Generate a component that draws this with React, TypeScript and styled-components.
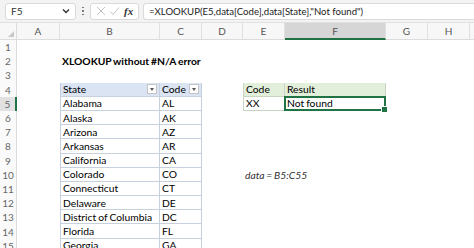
import { Fragment } from 'react';
import styled, { createGlobalStyle } from 'styled-components';

const GlobalStyle = createGlobalStyle`
  html, body {
    margin: 0;
    padding: 0;
    background: #ffffff;
    overflow: hidden;
  }
  body {
    font-family: Lato, "Liberation Sans", sans-serif;
  }
`;

const COLS = [17, 43, 100, 42, 41, 42, 101, 42, 42, 40];
const LETTERS = ['', 'A', 'B', 'C', 'D', 'E', 'F', 'G', 'H', ''];
const ROW_H = 14.2;

const states: [string, string][] = [
  ['Alabama', 'AL'],
  ['Alaska', 'AK'],
  ['Arizona', 'AZ'],
  ['Arkansas', 'AR'],
  ['California', 'CA'],
  ['Colorado', 'CO'],
  ['Connecticut', 'CT'],
  ['Delaware', 'DE'],
  ['District of Columbia', 'DC'],
  ['Florida', 'FL'],
  ['Georgia', 'GA'],
];

const Page = styled.div`
  width: 474px;
  height: 248px;
  overflow: hidden;
  display: flex;
  flex-direction: column;
`;

const FormulaBar = styled.div`
  height: 23px;
  flex: none;
  display: flex;
  align-items: center;
  gap: 4px;
  padding: 0 0 0 5px;
  background: #f3f3f3;
  border-bottom: 1px solid #e1e1e1;
  box-sizing: border-box;
`;

const NameBox = styled.div`
  width: 71px;
  height: 17px;
  box-sizing: border-box;
  background: #fff;
  border: 1px solid #dadada;
  border-radius: 3px;
  display: flex;
  align-items: center;
  justify-content: space-between;
  padding: 0 5px 0 5px;
  font-size: 10px;
  color: #333;
`;

const Dots = styled.div`
  width: 6px;
  display: flex;
  flex-direction: column;
  align-items: center;
  gap: 2px;
  span {
    width: 1.5px;
    height: 1.5px;
    background: #666;
    border-radius: 50%;
  }
`;

const FxBox = styled.div`
  width: 49px;
  height: 17px;
  box-sizing: border-box;
  background: #fff;
  border: 1px solid #dadada;
  border-radius: 3px;
  display: flex;
  align-items: center;
  justify-content: space-around;
  padding: 0 3px;
`;

const Fx = styled.span`
  font-family: "Liberation Serif", serif;
  font-style: italic;
  font-weight: bold;
  font-size: 11px;
  color: #333;
`;

const FormulaInput = styled.div`
  flex: 1;
  height: 17px;
  box-sizing: border-box;
  background: #fff;
  border: 1px solid #dadada;
  border-right: none;
  border-radius: 3px 0 0 3px;
  display: flex;
  align-items: center;
  padding-left: 5px;
  font-size: 9.6px;
  color: #222;
  white-space: nowrap;
`;

const Sheet = styled.div`
  display: grid;
  grid-template-columns: ${COLS.map((c) => `${c}px`).join(' ')};
  grid-template-rows: 17px repeat(15, ${ROW_H}px);
  font-size: 10.3px;
  word-spacing: -0.6px;
  color: #000;
`;

const ColHead = styled.div<{ $active?: boolean }>`
  background: ${(p) => (p.$active ? '#d6d6d6' : '#f7f7f7')};
  border-right: 1px solid #e0e0e0;
  border-bottom: ${(p) => (p.$active ? '2px solid #217346' : '1px solid #dcdcdc')};
  box-sizing: border-box;
  display: flex;
  align-items: center;
  justify-content: center;
  font-size: 10px;
  color: #555;
`;

const Corner = styled.div`
  background: #f7f7f7;
  border-right: 1px solid #dcdcdc;
  border-bottom: 1px solid #dcdcdc;
  box-sizing: border-box;
  position: relative;
  &::after {
    content: '';
    position: absolute;
    right: 2px;
    bottom: 2px;
    border-left: 6px solid transparent;
    border-bottom: 6px solid #c8c8c8;
  }
`;

const RowHead = styled.div<{ $active?: boolean }>`
  background: ${(p) => (p.$active ? '#e1e1e1' : '#fafafa')};
  border-right: ${(p) => (p.$active ? '2px solid #217346' : '1px solid #dcdcdc')};
  box-sizing: border-box;
  display: flex;
  align-items: center;
  justify-content: center;
  font-size: 10px;
  color: #666;
`;

const Cell = styled.div<{
  $fill?: string;
  $line?: string;
  $bold?: boolean;
  $italic?: boolean;
  $left?: boolean;
}>`
  position: relative;
  box-sizing: border-box;
  display: flex;
  align-items: center;
  padding-left: 2px;
  white-space: nowrap;
  overflow: visible;
  background: ${(p) => p.$fill || 'transparent'};
  border-bottom: ${(p) => (p.$line ? `1px solid ${p.$line}` : 'none')};
  border-right: ${(p) => (p.$line ? `1px solid ${p.$line}` : 'none')};
  border-left: ${(p) => (p.$line && p.$left ? `1px solid ${p.$line}` : 'none')};
  font-weight: ${(p) => (p.$bold ? 700 : 400)};
  font-style: ${(p) => (p.$italic ? 'italic' : 'normal')};
  color: ${(p) => (p.$italic ? '#333' : '#000')};
`;

const Selected = styled.div`
  position: absolute;
  inset: -1px -1px -1px -1px;
  border: 2px solid #217346;
  pointer-events: none;
  &::after {
    content: '';
    position: absolute;
    right: -4px;
    bottom: -4px;
    width: 5px;
    height: 5px;
    background: #217346;
    border: 1px solid #fff;
  }
`;

const FilterBtn = styled.span`
  position: absolute;
  right: 2px;
  top: 1.5px;
  width: 10px;
  height: 10px;
  box-sizing: border-box;
  background: #fff;
  border: 1px solid #c4c4c4;
  display: flex;
  align-items: center;
  justify-content: center;
  &::after {
    content: '';
    border-left: 2.5px solid transparent;
    border-right: 2.5px solid transparent;
    border-top: 3px solid #555;
  }
`;

const BLUE = '#dae4f3';
const BLUE_LINE = '#c7d0df';
const GREEN = '#e2efda';
const GREEN_LINE = '#c9d3c3';

type CellSpec = {
  text?: string;
  fill?: string;
  line?: string;
  bold?: boolean;
  italic?: boolean;
  left?: boolean;
  filter?: boolean;
  selected?: boolean;
};

function cellAt(row: number, col: number): CellSpec {
  if (row === 2 && col === 2) return { text: 'XLOOKUP without #N/A error', bold: true };
  if (row === 4 && col === 2) return { text: 'State', fill: BLUE, line: BLUE_LINE, left: true, filter: true };
  if (row === 4 && col === 3) return { text: 'Code', fill: BLUE, line: BLUE_LINE, filter: true };
  if (row >= 5 && row <= 15 && (col === 2 || col === 3)) {
    const s = states[row - 5];
    return { text: col === 2 ? s[0] : s[1], line: BLUE_LINE, left: col === 2 };
  }
  if (row === 4 && col === 5) return { text: 'Code', fill: GREEN, line: GREEN_LINE, left: true };
  if (row === 4 && col === 6) return { text: 'Result', fill: GREEN, line: GREEN_LINE };
  if (row === 5 && col === 5) return { text: 'XX', line: GREEN_LINE, left: true };
  if (row === 5 && col === 6) return { text: 'Not found', line: GREEN_LINE, selected: true };
  if (row === 10 && col === 5) return { text: 'data = B5:C55', italic: true };
  return {};
}

export default function App() {
  const rows = Array.from({ length: 15 }, (_, i) => i + 1);
  return (
    <Page>
      <GlobalStyle />
      <FormulaBar>
        <NameBox>
          <span>F5</span>
          <svg width="8" height="6" viewBox="0 0 8 6">
            <path d="M1 1.5 L4 4.5 L7 1.5" stroke="#333" strokeWidth="1.4" fill="none" />
          </svg>
        </NameBox>
        <Dots>
          <span />
          <span />
          <span />
        </Dots>
        <FxBox>
          <svg width="10" height="10" viewBox="0 0 10 10">
            <path d="M1 1 L9 9 M9 1 L1 9" stroke="#c4c4c4" strokeWidth="1" />
          </svg>
          <svg width="11" height="10" viewBox="0 0 11 10">
            <path d="M1 5.5 L4 8.5 L10 1.5" stroke="#c4c4c4" strokeWidth="1" fill="none" />
          </svg>
          <Fx>fx</Fx>
        </FxBox>
        <FormulaInput>=XLOOKUP(E5,data[Code],data[State],"Not found")</FormulaInput>
      </FormulaBar>
      <Sheet>
        {LETTERS.map((l, i) =>
          i === 0 ? <Corner key="corner" /> : <ColHead key={`h${i}`} $active={l === 'F'}>{l}</ColHead>
        )}
        {rows.map((r) => (
          <Fragment key={`row${r}`}>
            <RowHead $active={r === 5}>{r}</RowHead>
            {COLS.slice(1).map((_, ci) => {
              const c = cellAt(r, ci + 1);
              return (
                <Cell
                  key={`c${r}-${ci}`}
                  $fill={c.fill}
                  $line={c.line}
                  $bold={c.bold}
                  $italic={c.italic}
                  $left={c.left}
                >
                  {c.text}
                  {c.filter && <FilterBtn />}
                  {c.selected && <Selected />}
                </Cell>
              );
            })}
          </Fragment>
        ))}
      </Sheet>
    </Page>
  );
}
